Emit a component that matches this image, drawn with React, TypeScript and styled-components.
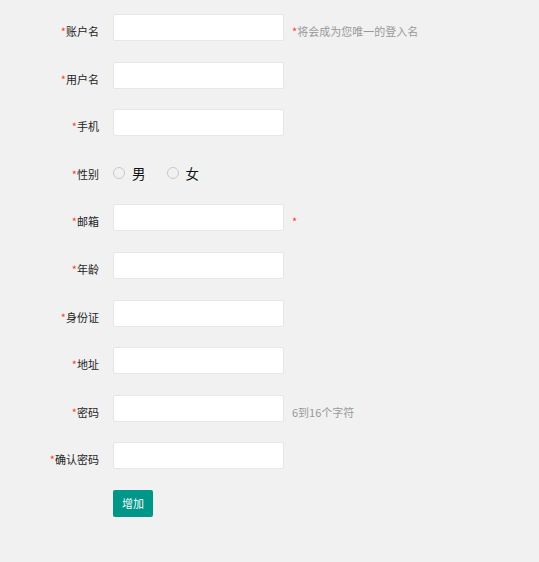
import React from "react";
import styled, { createGlobalStyle } from "styled-components";

const Global = createGlobalStyle`
  html, body { margin: 0; padding: 0; background: #f1f1f1; }
  body { font-family: "Noto Sans CJK SC", "Noto Sans", sans-serif; color: #222; }
  * { box-sizing: border-box; }
`;

const Form = styled.form`
  display: flex;
  flex-direction: column;
  padding-top: 14px;
  gap: 20.6px;
`;

const Item = styled.div`
  display: flex;
  align-items: flex-start;
  height: 27px;
`;

const Label = styled.label`
  width: 99px;
  flex: none;
  text-align: right;
  font-size: 11px;
  line-height: 20px;
  padding-top: 7px;
  color: #1e1e1e;
  white-space: nowrap;
`;

const Star = styled.span`
  color: #ff3b30;
`;

const Input = styled.input`
  margin-left: 14px;
  width: 171px;
  height: 27px;
  border: 1px solid #e6e6e6;
  border-radius: 2px;
  background: #fff;
  outline: none;
  padding: 0 8px;
  font-size: 11px;
`;

const Hint = styled.span`
  margin-left: 8px;
  font-size: 11px;
  line-height: 20px;
  padding-top: 7px;
  color: #999;
  white-space: nowrap;
`;

const RadioGroup = styled.div`
  margin-left: 14px;
  display: flex;
  align-items: center;
  height: 20px;
  margin-top: 6px;
`;

const RadioOption = styled.label`
  display: flex;
  align-items: center;
  margin-right: 21px;
  cursor: pointer;
`;

const Circle = styled.span`
  width: 12px;
  height: 12px;
  border: 1px solid #c9c9c9;
  border-radius: 50%;
  background: transparent;
  margin-right: 7px;
`;

const RadioText = styled.span`
  font-size: 13.5px;
  line-height: 20px;
  color: #111;
`;

const Button = styled.button`
  margin-left: 113px;
  width: 40px;
  height: 27px;
  border: none;
  border-radius: 2px;
  background: #009688;
  color: #fff;
  font-family: inherit;
  font-size: 11px;
  padding: 0;
  cursor: pointer;
`;

const fields: { label: string; hint?: React.ReactNode }[] = [
  { label: "账户名", hint: <><Star>*</Star>将会成为您唯一的登入名</> },
  { label: "用户名" },
  { label: "手机" },
  { label: "性别" },
  { label: "邮箱", hint: <Star>*</Star> },
  { label: "年龄" },
  { label: "身份证" },
  { label: "地址" },
  { label: "密码", hint: "6到16个字符" },
  { label: "确认密码" },
];

export default function App() {
  return (
    <>
      <Global />
      <Form onSubmit={(e) => e.preventDefault()}>
        {fields.map((f) => (
          <Item key={f.label}>
            <Label>
              <Star>*</Star>
              {f.label}
            </Label>
            {f.label === "性别" ? (
              <RadioGroup>
                <RadioOption>
                  <Circle />
                  <RadioText>男</RadioText>
                </RadioOption>
                <RadioOption>
                  <Circle />
                  <RadioText>女</RadioText>
                </RadioOption>
              </RadioGroup>
            ) : (
              <Input type={f.label.includes("密码") ? "password" : "text"} />
            )}
            {f.hint && <Hint>{f.hint}</Hint>}
          </Item>
        ))}
        <Item>
          <Button type="submit">增加</Button>
        </Item>
      </Form>
    </>
  );
}
